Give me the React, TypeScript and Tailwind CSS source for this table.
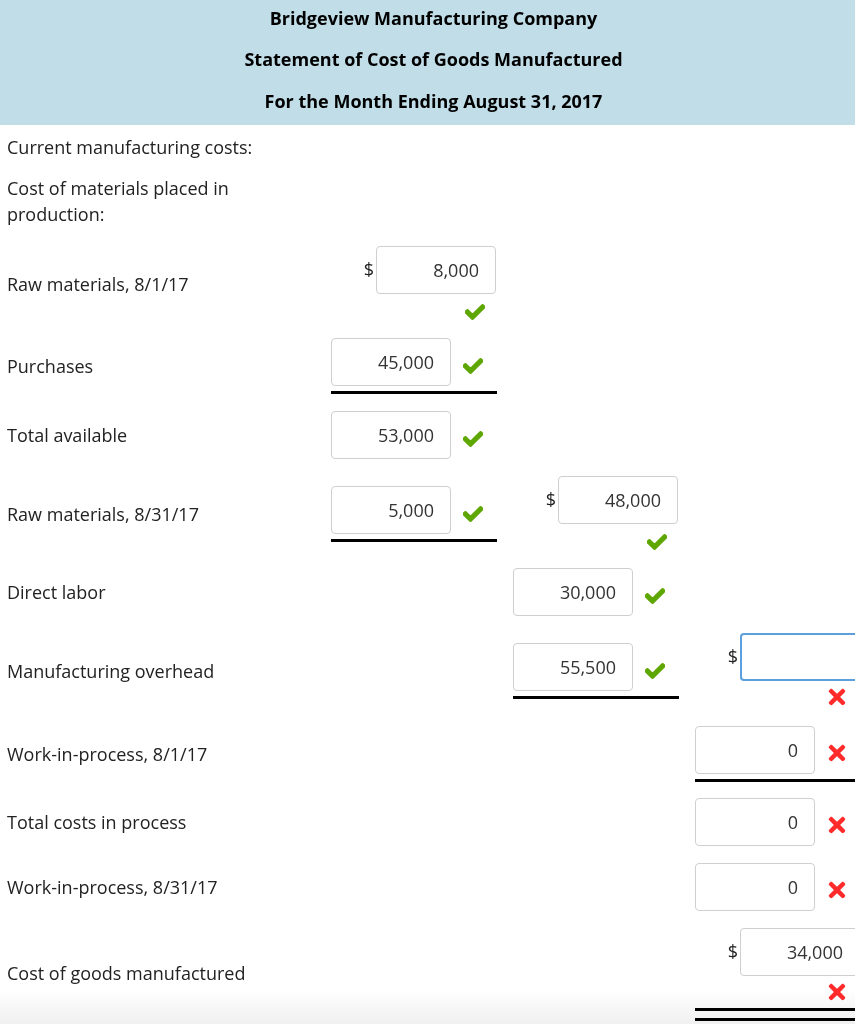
import { FaCheck, FaTimes } from "react-icons/fa";

type Mark = "ok" | "bad";

const Check = () => (
  <FaCheck className="text-[#5ea600] shrink-0 block" size={20} stroke="currentColor" strokeWidth={28} />
);
const Cross = () => <FaTimes className="text-[#ff2b2b] shrink-0 block" size={24} />;

function Box({ value, focused }: { value: string; focused?: boolean }) {
  return (
    <div
      className={
        focused
          ? "w-[120px] h-[48px] shrink-0 rounded-[4px] border-2 border-[#5b9fdf] bg-white"
          : "w-[120px] h-[48px] shrink-0 rounded-[4px] border border-[#cfcfcf] bg-white flex items-center justify-end pr-[16px] text-[18px] text-[#333]"
      }
    >
      {value}
    </div>
  );
}

// plain input with the mark to its right
function Cell({ value, mark, line }: { value: string; mark: Mark; line?: boolean }) {
  return (
    <div className={line ? "border-b-[3px] border-black pb-[5px]" : ""}>
      <div className="flex items-center">
        <Box value={value} />
        <div className={mark === "ok" ? "flex ml-[12px] mt-[7px]" : "flex ml-[10px] mt-[6px]"}>
          {mark === "ok" ? <Check /> : <Cross />}
        </div>
      </div>
    </div>
  );
}

// dollar input, mark underneath
function DollarCell({
  value,
  mark,
  focused,
  double,
}: {
  value: string;
  mark: Mark;
  focused?: boolean;
  double?: boolean;
}) {
  return (
    <div className="flex flex-col items-end pr-[1px]">
      <div className="flex items-center">
        <span className="text-[18px] text-[#222] mr-[2px] -mt-[2px]">$</span>
        <Box value={value} focused={focused} />
      </div>
      {mark === "ok" ? (
        <div className="flex mt-[8px] mr-[11px] h-[20px]">
          <Check />
        </div>
      ) : (
        <div className="flex mt-[4px] mr-[11px] h-[24px]">
          <Cross />
        </div>
      )}
      {double && (
        <div className="self-stretch mt-[4px] h-[13px] border-t-[3px] border-b-[3px] border-black" />
      )}
    </div>
  );
}

function Row({
  label,
  a,
  b,
  c,
  className,
  labelClass,
}: {
  label: string;
  a?: React.ReactNode;
  b?: React.ReactNode;
  c?: React.ReactNode;
  className?: string;
  labelClass?: string;
}) {
  return (
    <div className={"grid grid-cols-[315px_166px_166px_166px] gap-x-[16px] items-center " + (className ?? "")}>
      <div className={"pl-[7px] text-[18px] text-[#222] " + (labelClass ?? "")}>{label}</div>
      <div>{a}</div>
      <div>{b}</div>
      <div>{c}</div>
    </div>
  );
}

export default function App() {
  return (
    <div className="w-full overflow-hidden" style={{ fontFamily: '"Open Sans", sans-serif' }}>
      <div className="w-[867px] leading-[26px]">
        <div className="bg-[#c0dde8] h-[125px] flex flex-col items-center text-[18px] font-bold text-black">
          <div className="mt-[7px] leading-[22px]">Bridgeview Manufacturing Company</div>
          <div className="mt-[19px] leading-[22px]">Statement of Cost of Goods Manufactured</div>
          <div className="mt-[20px] leading-[22px]">For the Month Ending August 31, 2017</div>
        </div>

        <div className="pl-[7px] text-[18px] text-[#222] mt-[9px]">Current manufacturing costs:</div>
        <div className="pl-[7px] text-[18px] text-[#222] mt-[15px] w-[250px]">Cost of materials placed in production:</div>

        <Row className="mt-[19px]" label="Raw materials, 8/1/17" a={<DollarCell value="8,000" mark="ok" />} />
        <Row className="mt-[16px]" label="Purchases" a={<Cell value="45,000" mark="ok" line />} />
        <Row className="mt-[17px]" label="Total available" a={<Cell value="53,000" mark="ok" />} />
        <Row
          className="mt-[17px]"
          label="Raw materials, 8/31/17"
          a={<Cell value="5,000" mark="ok" line />}
          b={<DollarCell value="48,000" mark="ok" />}
        />
        <Row className="mt-[16px]" label="Direct labor" b={<Cell value="30,000" mark="ok" />} />
        <Row
          className="mt-[17px]"
          label="Manufacturing overhead"
          b={<Cell value="55,500" mark="ok" line />}
          c={<DollarCell value="" mark="bad" focused />}
        />
        <Row className="mt-[17px]" label="Work-in-process, 8/1/17" c={<Cell value="0" mark="bad" line />} />
        <Row className="mt-[16px]" label="Total costs in process" c={<Cell value="0" mark="bad" />} />
        <Row className="mt-[17px]" label="Work-in-process, 8/31/17" c={<Cell value="0" mark="bad" />} />
        <Row
          className="mt-[17px] pb-[20px]"
          labelClass="-mt-[4px]"
          label="Cost of goods manufactured"
          c={<DollarCell value="34,000" mark="bad" double />}
        />
      </div>
      <div className="fixed left-0 right-0 bottom-0 h-[34px] -z-10 pointer-events-none bg-gradient-to-b from-transparent to-[#f0f0f0]" />
    </div>
  );
}
